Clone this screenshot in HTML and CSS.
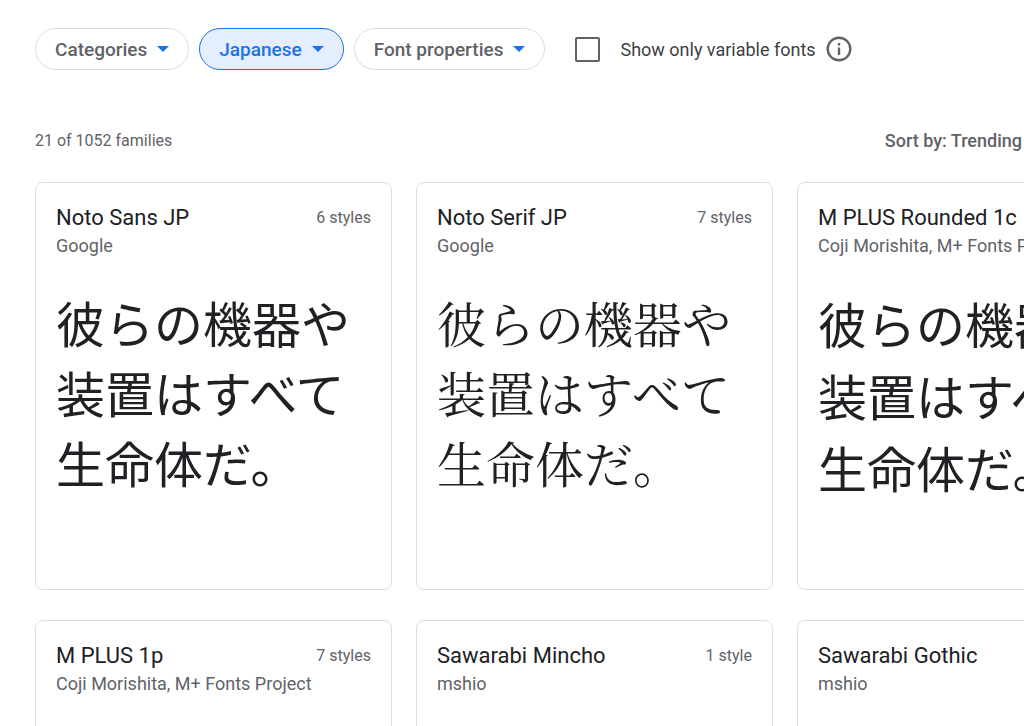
FILE: index.html
```html
<!DOCTYPE html>
<html lang="en">
<head>
  <meta charset="UTF-8" />
  <meta name="viewport" content="width=device-width, initial-scale=1" />
  <title>Browse Fonts</title>
  <link rel="stylesheet" href="styles.css">
</head>
<body>

  <div class="filters">
    <button type="button" class="chip">Categories
      <svg class="arrow" viewBox="0 0 12 6" aria-hidden="true"><path d="M0 0h12L6 6z" /></svg>
    </button>
    <button type="button" class="chip active">Japanese
      <svg class="arrow" viewBox="0 0 12 6" aria-hidden="true"><path d="M0 0h12L6 6z" /></svg>
    </button>
    <button type="button" class="chip">Font properties
      <svg class="arrow" viewBox="0 0 12 6" aria-hidden="true"><path d="M0 0h12L6 6z" /></svg>
    </button>
    <input type="checkbox" id="variable">
    <label for="variable">Show only variable fonts</label>
    <svg class="info" viewBox="0 0 26 26" role="img" aria-label="Info">
      <circle cx="13" cy="13" r="11.3" fill="none" stroke="#5f6368" stroke-width="2.4" />
      <path d="M11.8 7h2.4v2.4h-2.4zM11.8 11.6h2.4v7.4h-2.4z" fill="#5f6368" />
    </svg>
  </div>

  <div class="toolbar">
    <span class="count">21 of 1052 families</span>
    <button type="button" class="sort">Sort by: Trending</button>
  </div>

  <main class="grid">
    <article class="card">
      <header>
        <h2>Noto Sans JP</h2>
        <span class="styles">6 styles</span>
      </header>
      <p class="author">Google</p>
      <p class="sample" lang="ja">彼らの機器や装置はすべて生命体だ。</p>
    </article>

    <article class="card">
      <header>
        <h2>Noto Serif JP</h2>
        <span class="styles">7 styles</span>
      </header>
      <p class="author">Google</p>
      <p class="sample serif" lang="ja">彼らの機器や装置はすべて生命体だ。</p>
    </article>

    <article class="card">
      <header>
        <h2>M PLUS Rounded 1c</h2>
        <span class="styles">7 styles</span>
      </header>
      <p class="author">Coji Morishita, M+ Fonts Project</p>
      <p class="sample rounded" lang="ja">彼らの機器や装置はすべて生命体だ。</p>
    </article>

    <article class="card">
      <header>
        <h2>M PLUS 1p</h2>
        <span class="styles">7 styles</span>
      </header>
      <p class="author">Coji Morishita, M+ Fonts Project</p>
    </article>

    <article class="card">
      <header>
        <h2>Sawarabi Mincho</h2>
        <span class="styles">1 style</span>
      </header>
      <p class="author">mshio</p>
    </article>

    <article class="card">
      <header>
        <h2>Sawarabi Gothic</h2>
        <span class="styles">1 style</span>
      </header>
      <p class="author">mshio</p>
    </article>
  </main>

</body>
</html>
```
FILE: styles.css
```css
* {
  box-sizing: border-box;
}

body {
  margin: 0;
  padding: 28px 0 0 35px;
  font-family: Roboto, Arial, sans-serif;
  color: #202124;
  background: #fff;
  overflow: hidden;
}

button {
  font-family: inherit;
  cursor: pointer;
}

.filters {
  display: flex;
  align-items: center;
  gap: 10px;
}

.chip {
  display: flex;
  align-items: center;
  gap: 10px;
  height: 42px;
  padding: 0 19px;
  font-size: 19px;
  font-weight: 500;
  color: #5f6368;
  background: #fff;
  border: 1px solid #dadce0;
  border-radius: 21px;
  white-space: nowrap;
}

.chip.active {
  color: #1a73e8;
  background: #e4eefc;
  border-color: #1a73e8;
}

.arrow {
  width: 12px;
  height: 6px;
  fill: #1a73e8;
}

#variable {
  appearance: none;
  width: 25px;
  height: 25px;
  margin: 0 10px 0 20px;
  border: 2px solid #5f6368;
  border-radius: 2px;
}

#variable:checked {
  background: #1a73e8;
}

.filters label {
  font-size: 18px;
  color: #3c4043;
  white-space: nowrap;
}

.info {
  width: 26px;
  height: 26px;
}

.toolbar {
  display: flex;
  align-items: center;
  justify-content: space-between;
  height: 24px;
  margin: 58px 2px 30px 0;
  color: #5f6368;
}

.count,
.styles {
  font-size: 16px;
}

.sort {
  padding: 0;
  border: 0;
  background: none;
  color: inherit;
  font-size: 18px;
  font-weight: 500;
}

.grid {
  display: grid;
  grid-template-columns: repeat(3, minmax(357px, 1fr));
  grid-auto-rows: minmax(408px, auto);
  gap: 30px 24px;
}

.card {
  padding: 20px;
  border: 1px solid #dadce0;
  border-radius: 8px;
}

.card header {
  display: flex;
  align-items: center;
  justify-content: space-between;
  height: 28px;
}

.card h2 {
  margin: 0;
  font-size: 22px;
  font-weight: 400;
  white-space: nowrap;
}

.styles {
  color: #5f6368;
}

.author {
  margin: 5px 0 0;
  font-size: 18px;
  line-height: 20px;
  color: #5f6368;
}

.sample {
  margin: 31px 0 0;
  font-family: "Noto Sans CJK JP", sans-serif;
  font-size: 49px;
  line-height: 70px;
}

.sample.serif {
  font-family: "Noto Serif CJK JP", "Noto Serif JP", "Noto Sans CJK JP", serif;
}

.sample.rounded {
  font-family: "M PLUS Rounded 1c", "Noto Sans CJK JP", sans-serif;
  line-height: 72px;
}
```
